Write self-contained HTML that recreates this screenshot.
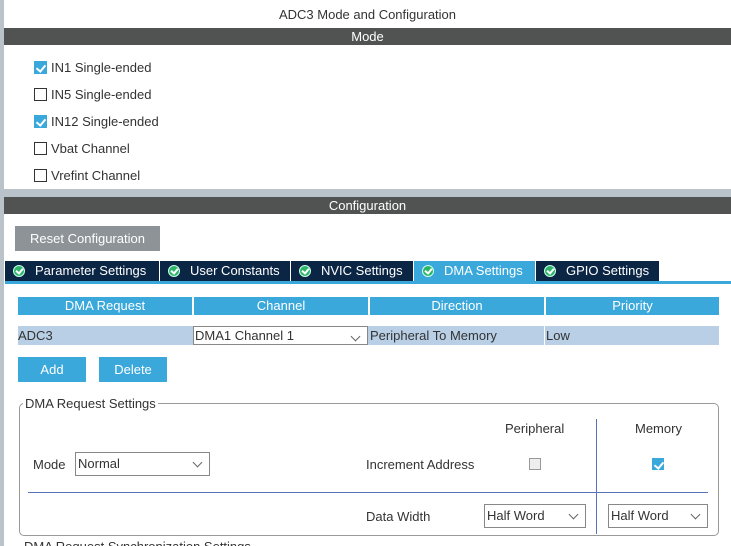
<!DOCTYPE html>
<html><head><meta charset="utf-8"><style>
*{margin:0;padding:0;box-sizing:border-box}
html,body{width:731px;height:546px;overflow:hidden}
body{background:#fff;font-family:"Liberation Sans",sans-serif;font-size:13px;color:#333;position:relative}
.a{position:absolute}
.bar{position:absolute;left:4px;width:727px;height:17px;background:#505352;color:#fff;text-align:center;line-height:17px;font-size:13px}
.cb{position:absolute;left:34px;width:13px;height:13px;border:1px solid #333;background:#fff}
.cb.on{background:#3aa8db;border-color:#3aa8db}
.cb.on::after{content:"";position:absolute;left:3px;top:1px;width:4px;height:7px;border:solid #fff;border-width:0 2px 2px 0;transform:rotate(40deg)}
.lbl{position:absolute;left:51px;font-size:13px;color:#333}
.tab{position:absolute;top:261px;height:20px;background:#0b2545;color:#fff;line-height:20px;font-size:13px}
.tab i{position:absolute;left:8px;top:4px;width:12px;height:12px;border-radius:50%;background:#2fb56a;border:1px solid #cfe;}
.tab i::after{content:"";position:absolute;left:3px;top:1px;width:3px;height:5px;border:solid #fff;border-width:0 2px 2px 0;transform:rotate(40deg)}
.tab span{position:absolute;left:30px}
.th{position:absolute;top:297px;height:18px;background:#3aa8db;color:#fff;text-align:center;line-height:18px}
.td{position:absolute;top:326px;height:19px;background:#b8cfe6;line-height:19px;color:#333}
.btn{position:absolute;top:357px;height:25px;background:#3aa8db;color:#fff;text-align:center;line-height:25px}
.sel{position:absolute;background:#fff;border:1px solid #888;height:24px;line-height:22px;padding-left:2px}
.sel::after{content:"";position:absolute;right:8px;top:6px;width:6px;height:6px;border:solid #666;border-width:0 1px 1px 0;transform:rotate(45deg)}
</style></head><body>
<div class="a" style="left:0;top:0;width:4px;height:546px;background:#b9c3c9"></div>
<div class="a" style="left:4px;top:7px;width:727px;text-align:center;font-size:13px">ADC3 Mode and Configuration</div>
<div class="bar" style="top:28px">Mode</div>
<div class="cb on" style="top:61px"></div><div class="lbl" style="top:60px">IN1 Single-ended</div>
<div class="cb" style="top:88px"></div><div class="lbl" style="top:87px">IN5 Single-ended</div>
<div class="cb on" style="top:115px"></div><div class="lbl" style="top:114px">IN12 Single-ended</div>
<div class="cb" style="top:142px"></div><div class="lbl" style="top:141px">Vbat Channel</div>
<div class="cb" style="top:169px"></div><div class="lbl" style="top:168px">Vrefint Channel</div>
<div class="a" style="left:4px;top:189px;width:727px;height:8px;background:#b9c3c9"></div>
<div class="bar" style="top:197px">Configuration</div>
<div class="a" style="left:15px;top:226px;width:145px;height:25px;background:#8e9397;color:#fff;text-align:center;line-height:25px">Reset Configuration</div>
<div class="tab" style="left:5px;width:154px"><i></i><span>Parameter Settings</span></div>
<div class="tab" style="left:160px;width:130px"><i></i><span>User Constants</span></div>
<div class="tab" style="left:291px;width:122px"><i></i><span>NVIC Settings</span></div>
<div class="tab" style="left:414px;width:121px;background:#3aa8db"><i></i><span>DMA Settings</span></div>
<div class="tab" style="left:536px;width:123px"><i></i><span>GPIO Settings</span></div>
<div class="a" style="left:5px;top:281px;width:726px;height:3px;background:#3aa8db"></div>
<div class="th" style="left:18px;width:174px">DMA Request</div>
<div class="th" style="left:194px;width:174px">Channel</div>
<div class="th" style="left:370px;width:174px">Direction</div>
<div class="th" style="left:546px;width:173px">Priority</div>
<div class="td" style="left:18px;width:701px"></div>
<div class="td" style="left:18px;width:170px">ADC3</div>
<div class="sel" style="left:193px;top:326px;width:175px;height:19px;line-height:17px;padding-left:1px">DMA1 Channel 1</div>
<div class="td" style="left:370px;width:170px;background:none">Peripheral To Memory</div>
<div class="a" style="left:544px;top:326px;width:1px;height:19px;background:#fff"></div>
<div class="td" style="left:546px;width:100px;background:none">Low</div>
<div class="btn" style="left:18px;width:68px">Add</div>
<div class="btn" style="left:99px;width:68px">Delete</div>
<div class="a" style="left:19px;top:403px;width:700px;height:133px;border:1px solid #999;border-radius:5px"></div>
<div class="a" style="left:23px;top:396px;background:#fff;padding:0 2px">DMA Request Settings</div>
<div class="a" style="left:505px;top:421px">Peripheral</div>
<div class="a" style="left:635px;top:421px">Memory</div>
<div class="a" style="left:596px;top:419px;width:1px;height:115px;background:#5a73b8"></div>
<div class="a" style="left:28px;top:492px;width:680px;height:1px;background:#5a73b8"></div>
<div class="a" style="left:33px;top:457px">Mode</div>
<div class="sel" style="left:75px;top:452px;width:135px">Normal</div>
<div class="a" style="left:366px;top:457px">Increment Address</div>
<div class="a" style="left:529px;top:458px;width:12px;height:12px;border:1px solid #999;background:#eee"></div>
<div class="cb on" style="left:652px;top:458px;width:12px;height:12px"></div>
<div class="a" style="left:366px;top:509px">Data Width</div>
<div class="sel" style="left:484px;top:504px;width:102px">Half Word</div>
<div class="sel" style="left:608px;top:504px;width:100px">Half Word</div>
<div class="a" style="left:24px;top:539px">DMA Request Synchronization Settings</div>
</body></html>
